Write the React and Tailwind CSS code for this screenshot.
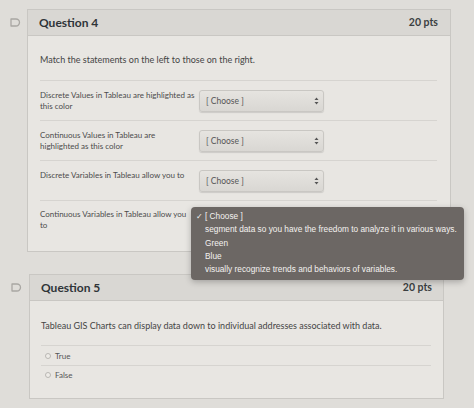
import React from "react";

function Flag({ className = "" }) {
  return (
    <svg width="11" height="9" viewBox="0 0 11 9" className={className}>
      <path d="M1 1 H6 A3.5 3.5 0 0 1 6 8 H1 Z" fill="none" stroke="#a9a7a3" strokeWidth="1.3" strokeLinejoin="round" />
    </svg>
  );
}

function Select({ label = "[ Choose ]", hidden = false }) {
  return (
    <div className={`w-[125px] h-[22px] shrink-0 rounded-[3px] border border-[#c9c7c3] bg-gradient-to-b from-[#e6e4e0] to-[#d9d7d3] shadow-[0_1px_1px_rgba(0,0,0,0.12)] flex items-center justify-between pl-[6px] pr-[4px] ${hidden ? "invisible" : ""}`}>
      <span className="text-[8.5px] text-[#555]">{label}</span>
      <svg width="5" height="8" viewBox="0 0 5 8">
        <path d="M2.5 0.5 L4.5 3 H0.5 Z" fill="#555" />
        <path d="M2.5 7.5 L4.5 5 H0.5 Z" fill="#555" />
      </svg>
    </div>
  );
}

function MatchRow({ lines, pt, pb, hideSelect = false, last = false }) {
  return (
    <div className={`flex items-start ${last ? "" : "border-b border-[#d6d4d0]"}`} style={{ paddingTop: pt, paddingBottom: pb }}>
      <div className="w-[159px] shrink-0 text-[8px] leading-[11px] text-[#4b4b4b] whitespace-nowrap">
        {lines.map((l, i) => (
          <div key={i}>{l}</div>
        ))}
      </div>
      <Select hidden={hideSelect} />
    </div>
  );
}

export default function App() {
  return (
    <div className="relative w-[474px] h-[408px] overflow-hidden bg-[#dfddd9] pt-[9px]" style={{ fontFamily: "Lato, 'Open Sans', sans-serif" }}>
      {/* Question 4 */}
      <div className="flex items-start pl-[10px]">
        <Flag className="mt-[9px]" />
        <div className="ml-[6px] w-[424px] h-[243px] border border-[#c9c7c3] bg-[#e8e6e2]">
          <div className="h-[26px] bg-[#d9d7d3] border-b border-[#c9c7c3] flex items-center justify-between pl-[11px] pr-[12px]">
            <span className="text-[12px] font-bold text-[#2f3438]">Question 4</span>
            <span className="text-[10.5px] font-bold text-[#3b3f42]">20 pts</span>
          </div>
          <div className="pl-[12px] pr-[13px]">
            <div className="pt-[18px] pb-[14px] text-[9px] leading-[12px] text-[#454545] border-b border-[#d6d4d0]">
              Match the statements on the left to those on the right.
            </div>
            <MatchRow lines={["Discrete Values in Tableau are highlighted as", "this color"]} pt={9} pb={8} />
            <MatchRow lines={["Continuous Values in Tableau are", "highlighted as this color"]} pt={9} pb={8} />
            <MatchRow lines={["Discrete Variables in Tableau allow you to"]} pt={9} pb={8} />
            <MatchRow lines={["Continuous Variables in Tableau allow you", "to"]} pt={8} pb={0} hideSelect last />
          </div>
        </div>
      </div>

      {/* Question 5 */}
      <div className="flex items-start pl-[11px] mt-[22px]">
        <Flag className="mt-[9px]" />
        <div className="ml-[7px] w-[415px] h-[125px] border border-[#c9c7c3] bg-[#e8e6e2]">
          <div className="h-[26px] bg-[#d9d7d3] border-b border-[#c9c7c3] flex items-center justify-between pl-[11px] pr-[11px]">
            <span className="text-[12px] font-bold text-[#2f3438]">Question 5</span>
            <span className="text-[10.5px] font-bold text-[#3b3f42]">20 pts</span>
          </div>
          <div className="pl-[11px] pr-[12px]">
            <div className="pt-[19px] pb-[13px] text-[9px] leading-[12px] text-[#454545] border-b border-[#d6d4d0]">
              Tableau GIS Charts can display data down to individual addresses associated with data.
            </div>
            <div className="flex items-center h-[20px] pl-[4px] border-b border-[#d6d4d0]">
              <span className="w-[6px] h-[6px] rounded-full border border-[#b9b7b3] bg-[#eeece8]" />
              <span className="ml-[4px] text-[8px] text-[#555]">True</span>
            </div>
            <div className="flex items-center h-[18px] pl-[4px]">
              <span className="w-[6px] h-[6px] rounded-full border border-[#b9b7b3] bg-[#eeece8]" />
              <span className="ml-[4px] text-[8px] text-[#555]">False</span>
            </div>
          </div>
        </div>
      </div>

      {/* Dropdown menu */}
      <div
        className="absolute left-[191px] top-[207px] w-[273px] h-[73px] rounded-[4px] bg-[#6c6764] shadow-[0_2px_6px_rgba(0,0,0,0.25)] pt-[3px] text-[8.3px] leading-[13.3px] text-[#f4f2f0]"
        style={{ fontFamily: "'Liberation Sans', Arial, sans-serif" }}
      >
        <div className="flex">
          <span className="w-[14px] text-right pr-[2px]">✓</span>
          <span>[ Choose ]</span>
        </div>
        <div className="pl-[14px]">segment data so you have the freedom to analyze it in various ways.</div>
        <div className="pl-[14px]">Green</div>
        <div className="pl-[14px]">Blue</div>
        <div className="pl-[14px]">visually recognize trends and behaviors of variables.</div>
      </div>
    </div>
  );
}
